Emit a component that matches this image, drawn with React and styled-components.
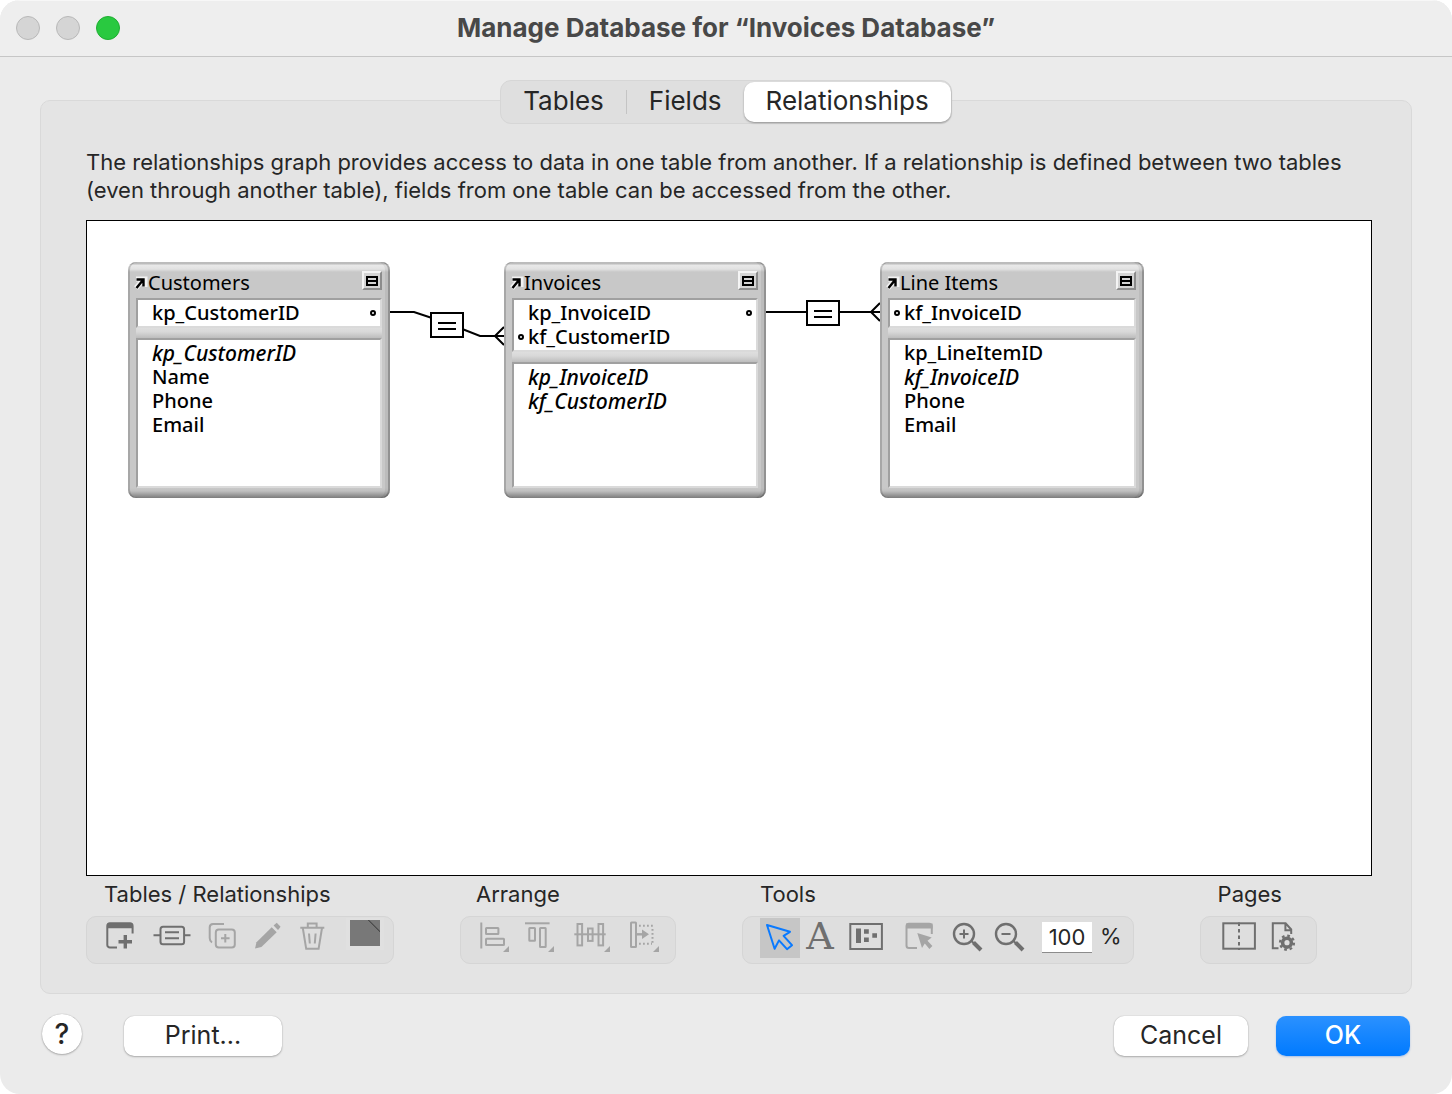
import React, { useState } from 'react';
import styled, { createGlobalStyle, css } from 'styled-components';

const GlobalStyle = createGlobalStyle`
    * {
        box-sizing: border-box;
    }
    body {
        margin: 0;
        background: #fff;
        color: #262626;
        font-family: Inter, 'Liberation Sans', sans-serif;
    }
    button, input {
        margin: 0;
        padding: 0;
        border: none;
        background: none;
        color: inherit;
        font-family: inherit;
    }
`;

const Window = styled.div`
    display: flex;
    flex-direction: column;
    min-height: 100vh;
    border-radius: 20px;
    background: #ebebeb;
    overflow: hidden;
`;

const TitleBar = styled.header`
    display: grid;
    grid-template-columns: 1fr auto 1fr;
    align-items: center;
    height: 57px;
    padding: 0 16px 2px;
    border-top: 1px solid #f7f7f7;
    border-bottom: 1px solid #c6c6c6;
    background: #eeeeee;
`;

const Lights = styled.div`
    display: flex;
    gap: 16px;
`;

const Light = styled.button`
    width: 24px;
    height: 24px;
    border: 1px solid ${(props) => (props.$active ? '#1fae32' : '#b8b8b8')};
    border-radius: 50%;
    background: ${(props) => (props.$active ? '#29c940' : '#d5d5d5')};
`;

const Title = styled.h1`
    margin: 0;
    color: #484848;
    font-size: 26px;
    font-weight: 700;
    line-height: 32px;
`;

const Body = styled.main`
    display: flex;
    flex: 1;
    flex-direction: column;
    padding: 23px 40px 38px;
`;

const Tabs = styled.div`
    display: flex;
    align-items: center;
    align-self: center;
    z-index: 1;
    height: 44px;
    margin-bottom: -24px;
    border: 1px solid #d6d6d6;
    border-radius: 11px;
    background: #dfdfdf;
`;

const Tab = styled.button`
    height: 40px;
    padding: 0 22px 2px;
    border-radius: 10px;
    font-size: 26px;
    line-height: 38px;
    ${(props) =>
        props.$selected &&
        css`
            background: #fff;
            box-shadow: 0 1px 2px rgba(0, 0, 0, 0.35);
        `}
`;

const TabDivider = styled.span`
    width: 1px;
    height: 24px;
    background: #c4c4c4;
`;

const Panel = styled.section`
    display: flex;
    flex: 1;
    flex-direction: column;
    padding: 47px 39px 29px 45px;
    border: 1px solid #d9d9d9;
    border-radius: 10px;
    background: #e4e4e4;
`;

const Description = styled.p`
    margin: 0 0 16px;
    font-size: 22px;
    line-height: 28px;
`;

const Graph = styled.div`
    position: relative;
    flex: 1;
    min-height: 400px;
    border: 1px solid #000;
    background: #fff;
    overflow: hidden;
`;

const Links = styled.svg`
    position: absolute;
    top: 0;
    left: 0;
    width: 800px;
    height: 280px;
    fill: none;
    stroke: #000;
    stroke-width: 2;
`;

const Node = styled.article`
    position: absolute;
    top: 41px;
    left: ${(props) => props.$left}px;
    display: flex;
    flex-direction: column;
    width: ${(props) => props.$width}px;
    height: 236px;
    padding: 0 8px 10px;
    border-radius: 8px;
    background: linear-gradient(#bcbcbc 2px, #e9e9e9 3px, #e2e2e2 7px, #c8c8c8 10px, #c8c8c8 226px, #c0c0c0 229px, #7c7c7c 236px);
    box-shadow: inset 2px 0 0 rgba(0, 0, 0, 0.16), inset -2px 0 0 rgba(0, 0, 0, 0.22), inset -5px 0 0 rgba(0, 0, 0, 0.06);
    color: #000;
    font-family: 'Noto Sans', 'Open Sans', sans-serif;
    font-size: 20px;
    font-weight: 500;
    line-height: 24px;
`;

const NodeHeader = styled.header`
    display: flex;
    align-items: flex-start;
    justify-content: space-between;
    height: 36px;
    padding-top: 9px;
`;

const NodeName = styled.h2`
    display: flex;
    align-items: center;
    margin: 0;
    font-size: 20px;
    font-weight: 400;
    line-height: 24px;
`;

const SourceArrow = styled.svg`
    width: 14px;
    height: 16px;
    margin-left: -2px;
`;

const Collapse = styled.button`
    display: flex;
    width: 20px;
    height: 19px;
    border: 2px solid;
    border-color: #f4f4f4 #8c8c8c #8c8c8c #f4f4f4;
    background: #d4d4d4;
`;

const FieldList = styled.ul`
    flex: ${(props) => (props.$grow ? 1 : 'none')};
    margin: 0;
    padding: 1px 4px 1px 0;
    border: 2px solid;
    border-color: #a0a0a0 #dadada #dadada #a0a0a0;
    background: #fff;
    list-style: none;
`;

const Field = styled.li`
    display: flex;
    align-items: center;
    ${(props) =>
        props.$used &&
        css`
            font-size: 21px;
            font-style: italic;
        `}
`;

const FieldName = styled.span`
    flex: 1;
`;

const Port = styled.span`
    width: 6px;
    height: 6px;
    margin: ${(props) => (props.$side === 'left' ? '0 4px' : '0')};
    border: 2px solid #000;
    border-radius: 50%;
`;

const PortSpace = styled.span`
    width: 14px;
`;

const Splitter = styled.div`
    height: 10px;
    background: linear-gradient(#dedede, #d8d8d8 40%, #bdbdbd);
`;

const Toolbars = styled.div`
    display: flex;
    flex-wrap: wrap;
    gap: 8px 66px;
    padding-top: 3px;
`;

const GroupLabel = styled.h3`
    margin: 0 0 7px;
    padding: 0 0 0 ${(props) => props.$indent || 18}px;
    font-size: 22px;
    font-weight: 400;
    line-height: 30px;
`;

const GroupBox = styled.div`
    display: flex;
    height: 48px;
    padding: 1px ${(props) => props.$right}px 0 ${(props) => props.$left}px;
    border: 1px solid #d5d5d5;
    border-radius: 10px;
    background: #dedede;
`;

const Tool = styled.button`
    display: flex;
    justify-content: center;
    width: ${(props) => props.$width || 40}px;
    height: 40px;
    color: ${(props) => (props.$active ? '#0a7aff' : '#6f6f6f')};
    background: ${(props) => (props.$active ? '#c6c6c6' : 'none')};
    &:disabled {
        color: #a5a5a5;
    }
`;

const Glyph = styled.svg`
    flex: none;
    width: 40px;
    height: 40px;
    fill: none;
    stroke: currentColor;
    stroke-width: 2;
`;

const Letter = styled.span`
    font-family: 'DejaVu Serif', serif;
    font-size: 38px;
    line-height: 36px;
`;

const Swatch = styled.button`
    width: 38px;
    height: 32px;
    margin-left: 14px;
    border: 4px solid #e0e0e0;
    border-top-width: 2px;
    background: linear-gradient(45deg, #787878 77%, #4c4c4c 78%, #4c4c4c 80%, #787878 81%);
`;

const ZoomInput = styled.input`
    width: 50px;
    height: 31px;
    margin: 4px 8px 0 12px;
    border-bottom: 1px solid #8c8c8c;
    background: #fff;
    font-size: 22px;
    text-align: center;
`;

const Percent = styled.label`
    font-size: 22px;
    line-height: 36px;
`;

const Footer = styled.footer`
    display: flex;
    align-items: flex-end;
    gap: 28px;
    padding: 20px 2px 0;
`;

const Button = styled.button`
    height: 40px;
    min-width: ${(props) => props.$width || 134}px;
    padding-bottom: 2px;
    border-radius: 10px;
    background: #fff;
    box-shadow: 0 0 1px rgba(0, 0, 0, 0.3), 0 1px 2px rgba(0, 0, 0, 0.25);
    font-size: 25px;
    line-height: 38px;
    ${(props) =>
        props.$primary &&
        css`
            background: linear-gradient(#2b91ff, #007aff);
            box-shadow: 0 1px 2px rgba(0, 90, 220, 0.3);
            color: #fff;
            font-weight: 500;
        `}
`;

const HelpButton = styled(Button)`
    margin: 0 14px 2px 0;
    padding-bottom: 0;
    border-radius: 50%;
    font-size: 28px;
    font-weight: 500;
`;

const Spacer = styled.div`
    flex: 1;
`;

const tables = [
    {
        name: 'Customers',
        left: 41,
        width: 262,
        keys: [{ name: 'kp_CustomerID', port: 'right' }],
        fields: [{ name: 'kp_CustomerID', used: true }, { name: 'Name' }, { name: 'Phone' }, { name: 'Email' }],
    },
    {
        name: 'Invoices',
        left: 417,
        width: 262,
        keys: [
            { name: 'kp_InvoiceID', port: 'right' },
            { name: 'kf_CustomerID', port: 'left' },
        ],
        fields: [
            { name: 'kp_InvoiceID', used: true },
            { name: 'kf_CustomerID', used: true },
        ],
    },
    {
        name: 'Line Items',
        left: 793,
        width: 264,
        keys: [{ name: 'kf_InvoiceID', port: 'left' }],
        fields: [{ name: 'kp_LineItemID' }, { name: 'kf_InvoiceID', used: true }, { name: 'Phone' }, { name: 'Email' }],
    },
];

function TableNode({ table }) {
    return (
        <Node $left={table.left} $width={table.width}>
            <NodeHeader>
                <NodeName>
                    <SourceArrow viewBox='0 0 14 16' fill='none'>
                        <path d='M2 4H11V12M10 4L2 13' stroke='#f2f2f2' strokeWidth='5' />
                        <path d='M2.5 4.5H9.5V11.5M9 5L2.5 13' stroke='#000' strokeWidth='2.4' />
                    </SourceArrow>
                    {table.name}
                </NodeName>
                <Collapse aria-label={`Collapse ${table.name}`}>
                    <svg width='16' height='15' fill='none' stroke='#000' strokeWidth='2'>
                        <path d='M3 4H13V12H3ZM3 8H13' />
                    </svg>
                </Collapse>
            </NodeHeader>
            <FieldList>
                {table.keys.map((key) => (
                    <Field key={key.name}>
                        {key.port === 'left' ? <Port $side='left' /> : <PortSpace />}
                        <FieldName>{key.name}</FieldName>
                        {key.port === 'right' && <Port />}
                    </Field>
                ))}
            </FieldList>
            <Splitter />
            <FieldList $grow>
                {table.fields.map((field) => (
                    <Field key={field.name} $used={field.used}>
                        <PortSpace />
                        <FieldName>{field.name}</FieldName>
                    </Field>
                ))}
            </FieldList>
        </Node>
    );
}

// small triangle in the corner of the buttons that open a menu
const Corner = ({ x = 35 }) => <path d={`M${x} 28V34H${x - 6}Z`} fill='currentColor' stroke='none' />;

const Magnifier = ({ plus }) => (
    <Glyph viewBox='0 0 40 40'>
        <circle cx='16' cy='16' r='10' strokeWidth='2.4' />
        <path d='M11.5 16H20.5' />
        {plus && <path d='M16 11.5V20.5' />}
        <path d='M23 22.5L26 25.5' />
        <path d='M25.5 24.5L33 32' strokeWidth='4' />
    </Glyph>
);

function App() {
    const [tab, setTab] = useState('Relationships');
    const [zoom, setZoom] = useState('100');

    return (
        <>
            <GlobalStyle />
            <Window>
                <TitleBar>
                    <Lights>
                        <Light aria-label='Close' />
                        <Light aria-label='Minimize' />
                        <Light aria-label='Zoom' $active />
                    </Lights>
                    <Title>Manage Database for “Invoices Database”</Title>
                </TitleBar>
                <Body>
                    <Tabs role='tablist'>
                        {['Tables', 'Fields', 'Relationships'].map((name) => (
                            <React.Fragment key={name}>
                                <Tab role='tab' aria-selected={tab === name} $selected={tab === name} onClick={() => setTab(name)}>
                                    {name}
                                </Tab>
                                {name === 'Tables' && <TabDivider />}
                            </React.Fragment>
                        ))}
                    </Tabs>
                    <Panel>
                        <Description>
                            The relationships graph provides access to data in one table from another. If a relationship is defined between two tables
                            (even through another table), fields from one table can be accessed from the other.
                        </Description>
                        <Graph>
                            <Links viewBox='0 0 800 280'>
                                <path d='M303 91H327L360 102L393 115H417M417 106L408 115L417 124' />
                                <path d='M679 91H793M793 82L784 91L793 100' />
                                <rect x='344' y='92' width='32' height='24' fill='#fff' />
                                <path d='M351 102H369M351 108H369' />
                                <rect x='720' y='80' width='32' height='24' fill='#fff' />
                                <path d='M727 90H745M727 96H745' />
                            </Links>
                            {tables.map((table) => (
                                <TableNode key={table.name} table={table} />
                            ))}
                        </Graph>
                        <Toolbars>
                            <div>
                                <GroupLabel>Tables / Relationships</GroupLabel>
                                <GroupBox $left={9} $right={9}>
                                    <Tool $width={48} aria-label='Add table'>
                                        <Glyph viewBox='0 0 40 40'>
                                            <path d='M17 29.5H10A2.5 2.5 0 0 1 7.3 27V8A2.5 2.5 0 0 1 10 5.3H30A2.5 2.5 0 0 1 32.6 8V15.5' />
                                            <path d='M7 8H33' strokeWidth='4.5' />
                                            <path d='M18.5 23.7H32M25.3 17V30.5' strokeWidth='3.4' />
                                        </Glyph>
                                    </Tool>
                                    <Tool $width={56} aria-label='Add relationship'>
                                        <Glyph viewBox='0 0 40 40'>
                                            <rect x='8.5' y='8.8' width='23.6' height='17.4' rx='2.5' />
                                            <path d='M1.5 17.3H8M32 17.3H38.5M13 14.3H27M13 20.3H27' />
                                        </Glyph>
                                    </Tool>
                                    <Tool $width={44} aria-label='Duplicate' disabled>
                                        <Glyph viewBox='0 0 40 40'>
                                            <path d='M22 6H11A3.5 3.5 0 0 0 7.7 9.5V20Q7.7 23 10 24.5' />
                                            <rect x='13.8' y='11.5' width='19' height='18' rx='3' />
                                            <path d='M19 20.3H27.6M23.3 16V24.6' />
                                        </Glyph>
                                    </Tool>
                                    <Tool $width={48} aria-label='Edit' disabled>
                                        <Glyph viewBox='0 0 40 40'>
                                            <path d='M7 30.5L8.5 24.3L23.7 9.3L28.7 14.3L13.4 29Z' fill='currentColor' stroke='none' />
                                            <path d='M25.6 7.4L28.7 4.8L32.6 8.8L30 12Z' fill='currentColor' stroke='none' />
                                        </Glyph>
                                    </Tool>
                                    <Tool aria-label='Delete' disabled>
                                        <Glyph viewBox='0 0 40 40'>
                                            <path d='M8.3 9.7H32.3M15.8 9V5.5H24.6V9M10.8 10L14.2 30.8H26.6L30 10' />
                                            <path d='M17 15.5L17.8 25.5M23.6 15.5L22.8 25.5' />
                                        </Glyph>
                                    </Tool>
                                    <Swatch aria-label='Table color' />
                                </GroupBox>
                            </div>
                            <div>
                                <GroupLabel $indent={16}>Arrange</GroupLabel>
                                <GroupBox $left={10} $right={10}>
                                    <Tool $width={46} aria-label='Align horizontally' disabled>
                                        <Glyph viewBox='0 0 40 40'>
                                            <path d='M7.3 4.5V30.5' />
                                            <rect x='12' y='10' width='12.4' height='6' rx='0.5' />
                                            <rect x='12' y='20.7' width='18' height='6.3' rx='0.5' />
                                            <Corner />
                                        </Glyph>
                                    </Tool>
                                    <Tool $width={44} aria-label='Align vertically' disabled>
                                        <Glyph viewBox='0 0 40 40'>
                                            <path d='M6 5.3H30.6' />
                                            <rect x='10.3' y='10' width='5.7' height='12.8' rx='0.5' />
                                            <rect x='21' y='10' width='5.7' height='19' rx='0.5' />
                                            <Corner />
                                        </Glyph>
                                    </Tool>
                                    <Tool $width={62} aria-label='Distribute' disabled>
                                        <Glyph viewBox='0 0 40 40'>
                                            <rect x='5.5' y='6' width='4.6' height='21.4' />
                                            <rect x='16' y='10.5' width='4.6' height='12.4' />
                                            <rect x='26.5' y='6' width='4.6' height='21.4' />
                                            <path d='M2.3 16.3H33.7' />
                                            <Corner x={38} />
                                        </Glyph>
                                    </Tool>
                                    <Tool $width={42} aria-label='Resize' disabled>
                                        <Glyph viewBox='0 0 40 40'>
                                            <rect x='7' y='4.5' width='5' height='24.4' rx='0.5' />
                                            <path d='M13 16.3H20' strokeWidth='2.4' />
                                            <path d='M18 11.5L25 16.3L18 21Z' fill='currentColor' stroke='none' />
                                            <path d='M15 7.8H30M28.5 11V26M15 25.8H28' strokeDasharray='1.8 2.2' />
                                            <Corner />
                                        </Glyph>
                                    </Tool>
                                </GroupBox>
                            </div>
                            <div>
                                <GroupLabel>Tools</GroupLabel>
                                <GroupBox $left={17} $right={11}>
                                    <Tool $active aria-label='Select'>
                                        <Glyph viewBox='0 0 40 40' strokeLinejoin='round'>
                                            <path d='M7 7L30 13.8L23.6 17.8L32 27.2L27 31.2L19 22.4L14.6 30.8Z' />
                                        </Glyph>
                                    </Tool>
                                    <Tool aria-label='Add note'>
                                        <Letter>A</Letter>
                                    </Tool>
                                    <Tool $width={52} aria-label='Fit in window'>
                                        <Glyph viewBox='0 0 40 40'>
                                            <rect x='4.3' y='6' width='31.6' height='25' />
                                            <path d='M10 10.5H15V25H10ZM18 11.2H22.8V15.8H18ZM18 19.6H22.8V24H18ZM26.3 15.3H31V19.7H26.3Z' fill='currentColor' stroke='none' />
                                        </Glyph>
                                    </Tool>
                                    <Tool $width={54} aria-label='Select tables' disabled>
                                        <Glyph viewBox='0 0 40 40'>
                                            <path d='M18 30H10A2.5 2.5 0 0 1 7.5 27.5V8A2.5 2.5 0 0 1 10 5.8H30A2.5 2.5 0 0 1 32.8 8V16' />
                                            <path d='M7 8H33.6' strokeWidth='5' />
                                            <path d='M18.3 15L32.7 19.5L28.5 22.7L33.4 28L30.4 31L25.8 25.5L23 30Z' fill='currentColor' stroke='none' />
                                        </Glyph>
                                    </Tool>
                                    <Tool $width={44} aria-label='Zoom in'>
                                        <Magnifier plus />
                                    </Tool>
                                    <Tool aria-label='Zoom out'>
                                        <Magnifier />
                                    </Tool>
                                    <ZoomInput id='zoom' value={zoom} onChange={(e) => setZoom(e.target.value)} />
                                    <Percent htmlFor='zoom'>%</Percent>
                                </GroupBox>
                            </div>
                            <div>
                                <GroupLabel>Pages</GroupLabel>
                                <GroupBox $left={16} $right={11}>
                                    <Tool $width={44} aria-label='Show page breaks'>
                                        <Glyph viewBox='0 0 40 40'>
                                            <rect x='4.3' y='5.3' width='31.6' height='25.4' />
                                            <path d='M20 4.5V32' strokeDasharray='3.5 3' />
                                        </Glyph>
                                    </Tool>
                                    <Tool $width={44} aria-label='Page setup'>
                                        <Glyph viewBox='0 0 40 40'>
                                            <path d='M15.5 30.3H9.8V5.3H22.6L28.2 11.5V16M22.4 5.5V12.2H28' />
                                            <circle cx='24' cy='24.7' r='4.4' strokeWidth='3.6' />
                                            <circle cx='24' cy='24.7' r='7' strokeWidth='2.2' strokeDasharray='2.75 2.75' />
                                        </Glyph>
                                    </Tool>
                                </GroupBox>
                            </div>
                        </Toolbars>
                    </Panel>
                    <Footer>
                        <HelpButton $width={40} aria-label='Help'>?</HelpButton>
                        <Button $width={158}>Print...</Button>
                        <Spacer />
                        <Button>Cancel</Button>
                        <Button $primary>OK</Button>
                    </Footer>
                </Body>
            </Window>
        </>
    );
}

export default App;
